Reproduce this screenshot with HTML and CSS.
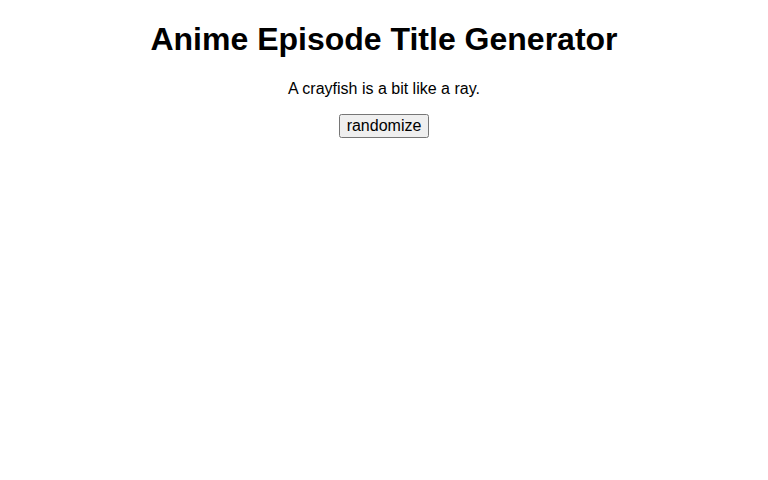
FILE: index.html
```html
<!DOCTYPE html>
<html lang="en">
<head>
    <meta charset="UTF-8">
    <meta name="viewport" content="width=device-width, initial-scale=1.0">
    <title>Anime Episode Title Generator</title>
    <link rel="stylesheet" href="styles.css">
</head>
<body>
    <div class="generator">
        <h1 class="generator-title">Anime Episode Title Generator</h1>
        <p id="episodeTitle" class="episode-title">A crayfish is a bit like a ray.</p>
        <button id="randomizeBtn" class="randomize-button">randomize</button>
    </div>
</body>
</html>
```

FILE: styles.css
```css
body {
    margin: 8px;
    font-family: 'Liberation Sans', Arial, sans-serif;
    background-color: #fff;
    color: #000;
}

.generator {
    text-align: center;
}

.generator-title {
    font-size: 2em;
    font-weight: bold;
    margin-top: 13.44px;
}

.episode-title {
    font-size: 16px;
}

.randomize-button {
    font-family: 'Liberation Sans', Arial, sans-serif;
    font-size: 16px;
}
```
